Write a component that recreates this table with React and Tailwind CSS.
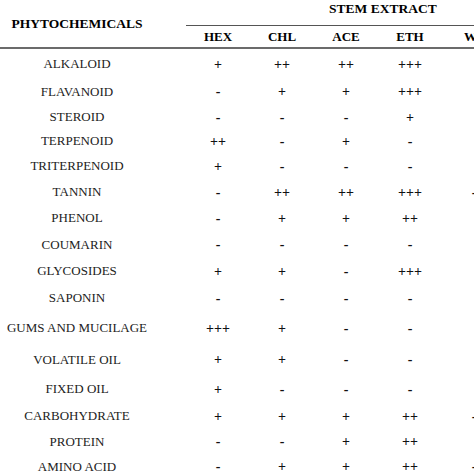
const COLS = ["HEX", "CHL", "ACE", "ETH", "WAT"];

// [label, row height, values]
const ROWS = [
  ["ALKALOID", "h-[28px]", ["+", "++", "++", "+++", ""]],
  ["FLAVANOID", "h-[27px]", ["-", "+", "+", "+++", ""]],
  ["STEROID", "h-[24px]", ["-", "-", "-", "+", ""]],
  ["TERPENOID", "h-[24px]", ["++", "-", "+", "-", ""]],
  ["TRITERPENOID", "h-[26px]", ["+", "-", "-", "-", ""]],
  ["TANNIN", "h-[26px]", ["-", "++", "++", "+++", "-"]],
  ["PHENOL", "h-[26px]", ["-", "+", "+", "++", ""]],
  ["COUMARIN", "h-[27px]", ["-", "-", "-", "-", ""]],
  ["GLYCOSIDES", "h-[26px]", ["+", "+", "-", "+++", ""]],
  ["SAPONIN", "h-[28px]", ["-", "-", "-", "-", ""]],
  ["GUMS AND MUCILAGE", "h-[32px]", ["+++", "+", "-", "-", ""]],
  ["VOLATILE OIL", "h-[31px]", ["+", "+", "-", "-", ""]],
  ["FIXED OIL", "h-[28px]", ["+", "-", "-", "-", ""]],
  ["CARBOHYDRATE", "h-[26px]", ["+", "+", "+", "++", "-"]],
  ["PROTEIN", "h-[25px]", ["-", "-", "+", "++", ""]],
  ["AMINO ACID", "h-[25px]", ["-", "+", "+", "++", "-"]],
];

export default function App() {
  return (
    <div className="w-[474px] h-[474px] overflow-hidden bg-white text-[#1a1a1a] font-['Liberation_Serif',serif]">
      <div className="w-[520px]">
        {/* header */}
        <div className="flex h-[47px]">
          <div className="w-[186px] pr-[32px] flex items-center justify-center text-[13.5px] font-bold text-black pt-[2px]">
            PHYTOCHEMICALS
          </div>
          <div className="flex-1 flex flex-col">
            <div className="h-[26px] flex items-center pl-[143px] text-[13.5px] font-bold text-black border-b border-[#555] pb-[6px]">
              STEM EXTRACT
            </div>
            <div className="flex flex-1 items-center text-[13px] font-bold text-black">
              {COLS.map((c, i) => (
                <div key={c} className={i === 4 ? "w-[64px] pl-[22px]" : "w-[64px] text-center"}>{c}</div>
              ))}
            </div>
          </div>
        </div>
        <div className="h-[2px] bg-[#6b6b6b] mb-px" />

        {/* body */}
        {ROWS.map(([label, h, vals]) => (
          <div key={label} className={`flex items-center ${h}`}>
            <div className="w-[186px] pr-[32px] text-center text-[13px] text-[#222]">{label}</div>
            {vals.map((v, i) => (
              <div key={i} className="w-[64px] text-center text-[14px] font-bold text-[#111]">
                {v}
              </div>
            ))}
          </div>
        ))}
      </div>
    </div>
  );
}
